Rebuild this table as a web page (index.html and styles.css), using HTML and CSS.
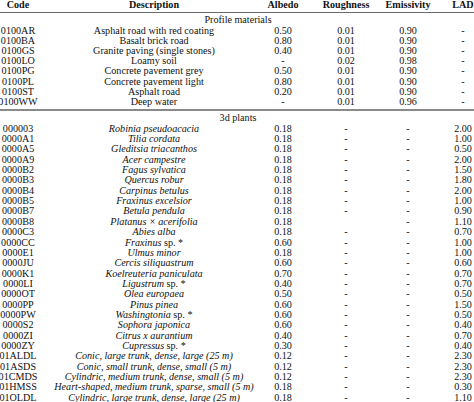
FILE: index.html
```html
<!DOCTYPE html>
<html>
<head>
<meta charset="utf-8">
<link rel="stylesheet" href="styles.css">
</head>
<body>
<div class="table">
  <div class="row head">
    <div class="c">Code</div><div class="c">Description</div><div class="c">Albedo</div><div class="c">Roughness</div><div class="c">Emissivity</div><div class="c">LAD</div>
  </div>
  <div class="group profile">
    <div class="section">Profile materials</div>
    <div class="row"><div class="c">0100AR</div><div class="c">Asphalt road with red coating</div><div class="c">0.50</div><div class="c">0.01</div><div class="c">0.90</div><div class="c">-</div></div>
    <div class="row"><div class="c">0100BA</div><div class="c">Basalt brick road</div><div class="c">0.80</div><div class="c">0.01</div><div class="c">0.90</div><div class="c">-</div></div>
    <div class="row"><div class="c">0100GS</div><div class="c">Granite paving (single stones)</div><div class="c">0.40</div><div class="c">0.01</div><div class="c">0.90</div><div class="c">-</div></div>
    <div class="row"><div class="c">0100LO</div><div class="c">Loamy soil</div><div class="c">-</div><div class="c">0.02</div><div class="c">0.98</div><div class="c">-</div></div>
    <div class="row"><div class="c">0100PG</div><div class="c">Concrete pavement grey</div><div class="c">0.50</div><div class="c">0.01</div><div class="c">0.90</div><div class="c">-</div></div>
    <div class="row"><div class="c">0100PL</div><div class="c">Concrete pavement light</div><div class="c">0.80</div><div class="c">0.01</div><div class="c">0.90</div><div class="c">-</div></div>
    <div class="row"><div class="c">0100ST</div><div class="c">Asphalt road</div><div class="c">0.20</div><div class="c">0.01</div><div class="c">0.90</div><div class="c">-</div></div>
    <div class="row"><div class="c">0100WW</div><div class="c">Deep water</div><div class="c">-</div><div class="c">0.01</div><div class="c">0.96</div><div class="c">-</div></div>
  </div>
  <div class="group plants">
    <div class="section">3d plants</div>
    <div class="row"><div class="c">000003</div><div class="c i">Robinia pseudoacacia</div><div class="c">0.18</div><div class="c">-</div><div class="c">-</div><div class="c">2.00</div></div>
    <div class="row"><div class="c">0000A1</div><div class="c i">Tilia cordata</div><div class="c">0.18</div><div class="c">-</div><div class="c">-</div><div class="c">1.00</div></div>
    <div class="row"><div class="c">0000A5</div><div class="c i">Gleditsia triacanthos</div><div class="c">0.18</div><div class="c">-</div><div class="c">-</div><div class="c">0.50</div></div>
    <div class="row"><div class="c">0000A9</div><div class="c i">Acer campestre</div><div class="c">0.18</div><div class="c">-</div><div class="c">-</div><div class="c">2.00</div></div>
    <div class="row"><div class="c">0000B2</div><div class="c i">Fagus sylvatica</div><div class="c">0.18</div><div class="c">-</div><div class="c">-</div><div class="c">1.50</div></div>
    <div class="row"><div class="c">0000B3</div><div class="c i">Quercus robur</div><div class="c">0.18</div><div class="c">-</div><div class="c">-</div><div class="c">1.80</div></div>
    <div class="row"><div class="c">0000B4</div><div class="c i">Carpinus betulus</div><div class="c">0.18</div><div class="c">-</div><div class="c">-</div><div class="c">2.00</div></div>
    <div class="row"><div class="c">0000B5</div><div class="c i">Fraxinus excelsior</div><div class="c">0.18</div><div class="c">-</div><div class="c">-</div><div class="c">1.00</div></div>
    <div class="row"><div class="c">0000B7</div><div class="c i">Betula pendula</div><div class="c">0.18</div><div class="c">-</div><div class="c">-</div><div class="c">0.90</div></div>
    <div class="row"><div class="c">0000B8</div><div class="c i">Platanus × acerifolia</div><div class="c">0.18</div><div class="c"></div><div class="c">-</div><div class="c">1.10</div></div>
    <div class="row"><div class="c">0000C3</div><div class="c i">Abies alba</div><div class="c">0.18</div><div class="c">-</div><div class="c">-</div><div class="c">0.70</div></div>
    <div class="row"><div class="c">0000CC</div><div class="c"><span class="i">Fraxinus</span>&nbsp;sp. *</div><div class="c">0.60</div><div class="c">-</div><div class="c">-</div><div class="c">1.00</div></div>
    <div class="row"><div class="c">0000E1</div><div class="c i">Ulmus minor</div><div class="c">0.18</div><div class="c">-</div><div class="c">-</div><div class="c">1.00</div></div>
    <div class="row"><div class="c">0000JU</div><div class="c i">Cercis siliquastrum</div><div class="c">0.60</div><div class="c">-</div><div class="c">-</div><div class="c">0.60</div></div>
    <div class="row"><div class="c">0000K1</div><div class="c i">Koelreuteria paniculata</div><div class="c">0.70</div><div class="c">-</div><div class="c">-</div><div class="c">0.70</div></div>
    <div class="row"><div class="c">0000LI</div><div class="c"><span class="i">Ligustrum</span>&nbsp;sp. *</div><div class="c">0.40</div><div class="c">-</div><div class="c">-</div><div class="c">0.70</div></div>
    <div class="row"><div class="c">0000OT</div><div class="c i">Olea europaea</div><div class="c">0.50</div><div class="c">-</div><div class="c">-</div><div class="c">0.50</div></div>
    <div class="row"><div class="c">0000PP</div><div class="c i">Pinus pinea</div><div class="c">0.60</div><div class="c">-</div><div class="c">-</div><div class="c">1.50</div></div>
    <div class="row"><div class="c">0000PW</div><div class="c"><span class="i">Washingtonia</span>&nbsp;sp. *</div><div class="c">0.60</div><div class="c">-</div><div class="c">-</div><div class="c">0.50</div></div>
    <div class="row"><div class="c">0000S2</div><div class="c i">Sophora japonica</div><div class="c">0.60</div><div class="c">-</div><div class="c">-</div><div class="c">0.40</div></div>
    <div class="row"><div class="c">0000ZI</div><div class="c i">Citrus x aurantium</div><div class="c">0.40</div><div class="c">-</div><div class="c">-</div><div class="c">0.70</div></div>
    <div class="row"><div class="c">0000ZY</div><div class="c"><span class="i">Cupressus</span>&nbsp;sp. *</div><div class="c">0.30</div><div class="c">-</div><div class="c">-</div><div class="c">0.40</div></div>
    <div class="row"><div class="c">01ALDL</div><div class="c i">Conic, large trunk, dense, large (25 m)</div><div class="c">0.12</div><div class="c">-</div><div class="c">-</div><div class="c">2.30</div></div>
    <div class="row"><div class="c">01ASDS</div><div class="c i">Conic, small trunk, dense, small (5 m)</div><div class="c">0.12</div><div class="c">-</div><div class="c">-</div><div class="c">2.30</div></div>
    <div class="row"><div class="c">01CMDS</div><div class="c i">Cylindric, medium trunk, dense, small (5 m)</div><div class="c">0.12</div><div class="c">-</div><div class="c">-</div><div class="c">2.30</div></div>
    <div class="row"><div class="c">01HMSS</div><div class="c i">Heart-shaped, medium trunk, sparse, small (5 m)</div><div class="c">0.18</div><div class="c">-</div><div class="c">-</div><div class="c">0.30</div></div>
    <div class="row"><div class="c">01OLDL</div><div class="c i">Cylindric, large trunk, dense, large (25 m)</div><div class="c">0.18</div><div class="c">-</div><div class="c">-</div><div class="c">1.10</div></div>
  </div>
</div>
</body>
</html>
```

FILE: styles.css
```css
html, body {
  margin: 0;
  padding: 0;
  background: #ffffff;
  overflow: hidden;
}

.table {
  width: 476px;
  font-family: "Liberation Serif", "Times New Roman", serif;
  font-size: 10.15px;
  color: #111111;
}

.row {
  display: grid;
  grid-template-columns: 36px 236px 22px 104px 20px 90px;
  height: 10.15px;
  line-height: 10.15px;
  white-space: nowrap;
}

.c {
  display: flex;
  justify-content: center;
  white-space: nowrap;
}

.i {
  font-style: italic;
}

.head {
  height: 12px;
  line-height: 10px;
  font-weight: bold;
  border-bottom: 1px solid #6a6a6a;
}

.section {
  text-align: center;
  line-height: 10.3px;
  padding-top: 2px;
  padding-bottom: 0.5px;
  white-space: nowrap;
}

.profile {
  padding-bottom: 2px;
  border-bottom: 2px solid #8a8a8a;
}

.plants .row {
  height: 10.35px;
  line-height: 10.35px;
}
```
